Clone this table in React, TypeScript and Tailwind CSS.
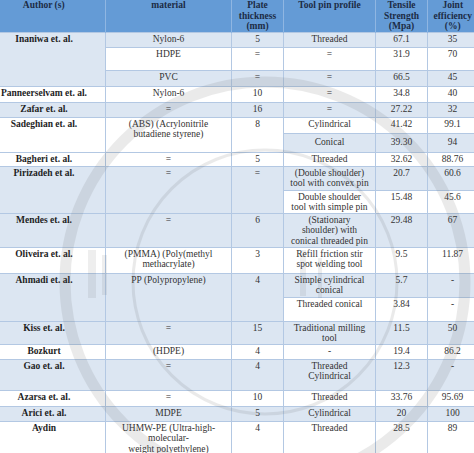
import type { ReactNode } from "react"

type Cell = {
  t: ReactNode
  rs?: number
  bold?: boolean
  bg?: "blue" | "white"
  mid?: boolean
}

type Row = {
  h: number
  bg: "blue" | "white"
  cells: Cell[]
}

const B = "blue"
const W = "white"

const ROWS: Row[] = [
  { h: 15, bg: B, cells: [{ t: "Inaniwa et. al.", rs: 3, bold: true }, { t: "Nylon-6" }, { t: "5" }, { t: "Threaded" }, { t: "67.1" }, { t: "35" }] },
  { h: 23, bg: W, cells: [{ t: "HDPE" }, { t: "=" }, { t: "=" }, { t: "31.9" }, { t: "70" }] },
  { h: 16, bg: B, cells: [{ t: "PVC" }, { t: "=" }, { t: "=" }, { t: "66.5" }, { t: "45" }] },
  { h: 16, bg: W, cells: [{ t: "Panneerselvam et. al.", bold: true }, { t: "Nylon-6" }, { t: "10" }, { t: "=" }, { t: "34.8" }, { t: "40" }] },
  { h: 15, bg: B, cells: [{ t: "Zafar et. al.", bold: true }, { t: "=" }, { t: "16" }, { t: "=" }, { t: "27.22" }, { t: "32" }] },
  {
    h: 16, bg: W, cells: [
      { t: "Sadeghian et. al.", rs: 2, bold: true },
      { t: <>(ABS) (Acrylonitrile<br />butadiene styrene)</>, rs: 2 },
      { t: "8", rs: 2 },
      { t: "Cylindrical" }, { t: "41.42" }, { t: "99.1" },
    ],
  },
  { h: 19, bg: B, cells: [{ t: "Conical", mid: true }, { t: "39.30", mid: true }, { t: "94", mid: true }] },
  { h: 14, bg: W, cells: [{ t: "Bagheri et. al.", bold: true }, { t: "=" }, { t: "5" }, { t: "Threaded" }, { t: "32.62" }, { t: "88.76" }] },
  {
    h: 24, bg: B, cells: [
      { t: "Pirizadeh et al.", rs: 2, bold: true },
      { t: "=", rs: 2 },
      { t: "=", rs: 2 },
      { t: <>(Double shoulder)<br />tool with convex pin</> }, { t: "20.7" }, { t: "60.6" },
    ],
  },
  { h: 22, bg: W, cells: [{ t: <>Double shoulder<br />tool with simple pin</> }, { t: "15.48" }, { t: "45.6" }] },
  {
    h: 34, bg: B, cells: [
      { t: "Mendes et. al.", bold: true }, { t: "=" }, { t: "6" },
      { t: <>(Stationary<br />shoulder) with<br />conical threaded pin</> }, { t: "29.48" }, { t: "67" },
    ],
  },
  {
    h: 26, bg: W, cells: [
      { t: "Oliveira et. al.", bold: true }, { t: <>(PMMA) (Poly(methyl<br />methacrylate)</> }, { t: "3" },
      { t: <>Refill friction stir<br />spot welding tool</> }, { t: "9.5" }, { t: "11.87" },
    ],
  },
  {
    h: 24, bg: B, cells: [
      { t: "Ahmadi et. al.", rs: 2, bold: true },
      { t: "PP (Polypropylene)", rs: 2 },
      { t: "4", rs: 2 },
      { t: <>Simple cylindrical<br />conical</> }, { t: "5.7" }, { t: "-" },
    ],
  },
  { h: 24, bg: W, cells: [{ t: "Threaded conical" }, { t: "3.84" }, { t: "-" }] },
  {
    h: 22, bg: B, cells: [
      { t: "Kiss et. al.", bold: true }, { t: "=" }, { t: "15" },
      { t: <>Traditional milling<br />tool</> }, { t: "11.5" }, { t: "50" },
    ],
  },
  { h: 15, bg: W, cells: [{ t: "Bozkurt", bold: true }, { t: "(HDPE)" }, { t: "4" }, { t: "-" }, { t: "19.4" }, { t: "86.2" }] },
  {
    h: 31, bg: B, cells: [
      { t: "Gao et. al.", bold: true }, { t: "=" }, { t: "4" },
      { t: <>Threaded<br />Cylindrical</> }, { t: "12.3" }, { t: "-" },
    ],
  },
  { h: 16, bg: W, cells: [{ t: "Azarsa et. al.", bold: true }, { t: "=" }, { t: "10" }, { t: "Threaded" }, { t: "33.76" }, { t: "95.69" }] },
  { h: 15, bg: B, cells: [{ t: "Arici et. al.", bold: true }, { t: "MDPE" }, { t: "5" }, { t: "Cylindrical" }, { t: "20" }, { t: "100" }] },
  {
    h: 40, bg: W, cells: [
      { t: "Aydin", bold: true },
      { t: <>UHMW-PE (Ultra-high-<br />molecular-<br />weight polyethylene)</> },
      { t: "4" }, { t: "Threaded" }, { t: "28.5" }, { t: "89" },
    ],
  },
]

// faint university seal behind the table
function Watermark() {
  return (
    <svg className="pointer-events-none absolute left-0 top-0" width="474" height="453" viewBox="0 0 474 453">
      <g opacity="0.12" fill="none" stroke="#5a5a5a">
        <circle cx="265" cy="282" r="200" strokeWidth="11" />
        <circle cx="265" cy="282" r="132" strokeWidth="3" />
      </g>
      <g opacity="0.09" fill="#4a4a4a">
        <rect x="88" y="250" width="8" height="48" />
        <rect x="102" y="255" width="5" height="40" />
        <rect x="300" y="250" width="6" height="46" />
        <rect x="318" y="258" width="4" height="40" />
      </g>
    </svg>
  )
}

export default function App() {
  const bgOf = (c: string) => (c === "blue" ? "bg-[#dce6f2]" : "bg-white")

  return (
    <div className="relative h-[453px] w-[474px] overflow-hidden bg-white" style={{ fontFamily: "'Liberation Serif', 'Times New Roman', serif" }}>
      <table className="-ml-[18px] w-[495px] table-fixed border-collapse text-[9.5px] leading-[10.5px] text-[#333]">
        <colgroup>
          <col className="w-[123px]" />
          <col className="w-[126px]" />
          <col className="w-[52px]" />
          <col className="w-[92px]" />
          <col className="w-[52px]" />
          <col className="w-[50px]" />
        </colgroup>
        <thead>
          <tr className="h-[32px] bg-[#649bd6] align-top font-bold text-[#1c2b45]">
            <th className="border-r border-[#8fb6e2]">Author (s)</th>
            <th className="border-r border-[#8fb6e2]">material</th>
            <th className="border-r border-[#8fb6e2]">Plate<br />thickness<br />(mm)</th>
            <th className="border-r border-[#8fb6e2]">Tool pin profile</th>
            <th className="border-r border-[#8fb6e2]">Tensile<br />Strength<br />(Mpa)</th>
            <th className="whitespace-nowrap">Joint<br />efficiency<br />(%)</th>
          </tr>
        </thead>
        <tbody>
          {ROWS.map((row, i) => (
            <tr key={i} style={{ height: row.h }} className="align-top">
              {row.cells.map((c, j) => (
                <td
                  key={j}
                  rowSpan={c.rs}
                  className={`border border-[#b3c8e3] px-[2px] text-center ${c.mid ? "pt-[3px]" : "pt-[1px]"} ${bgOf(c.bg ?? row.bg)} ${c.bold ? "whitespace-nowrap font-bold text-[#1e1e1e]" : ""}`}
                >
                  {c.t}
                </td>
              ))}
            </tr>
          ))}
        </tbody>
      </table>
      <Watermark />
    </div>
  )
}
